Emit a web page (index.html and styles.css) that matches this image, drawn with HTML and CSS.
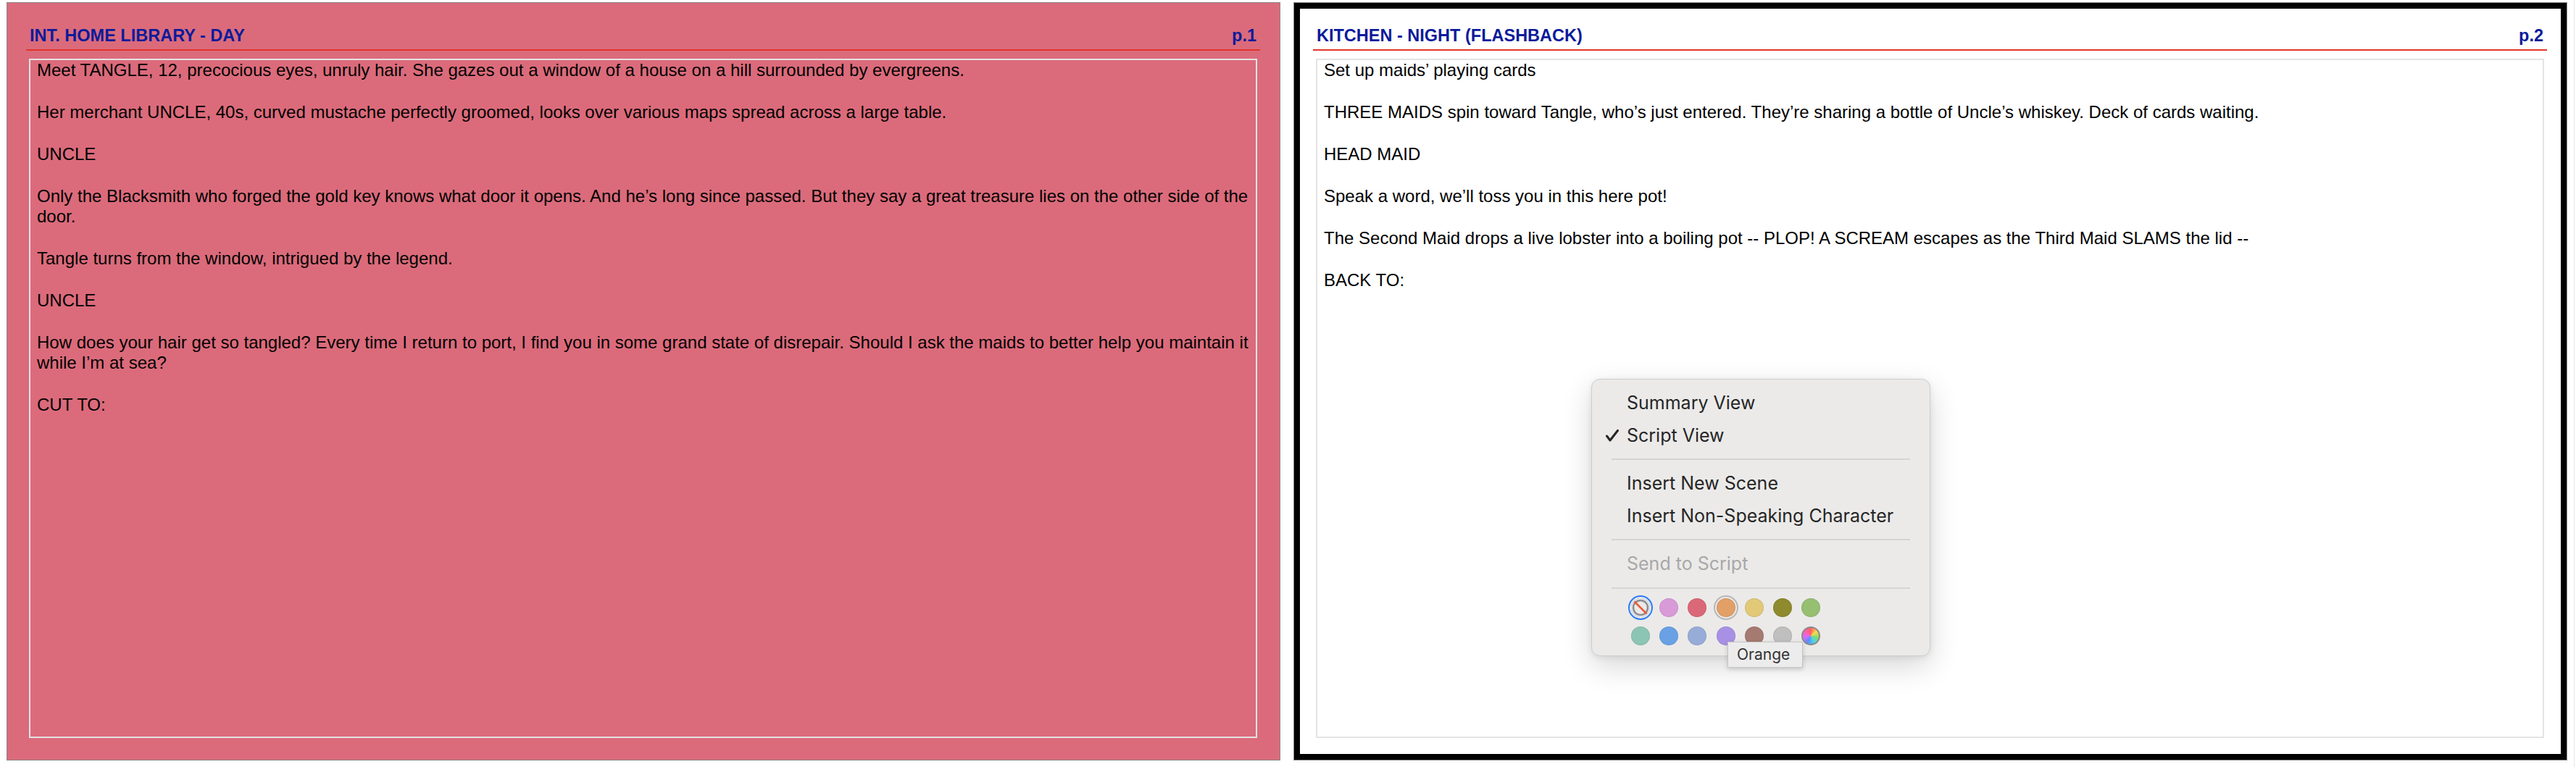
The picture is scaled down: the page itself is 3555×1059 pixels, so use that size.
FILE: index.html
```html
<!DOCTYPE html>
<html lang="en">
<head>
  <meta charset="UTF-8" />
  <title>Script View</title>
  <link rel="stylesheet" href="styles.css">
</head>
<body>
  <div class="page">

    <!-- Scene 1 -->
    <div class="scene scene-red">
      <div class="scene-head">
        <span>INT. HOME LIBRARY - DAY</span>
        <span>p.1</span>
      </div>
      <div class="scene-body">
        <p>Meet TANGLE, 12, precocious eyes, unruly hair. She gazes out a window of a house on a hill surrounded by evergreens.</p>
        <p>Her merchant UNCLE, 40s, curved mustache perfectly groomed, looks over various maps spread across a large table.</p>
        <p>UNCLE</p>
        <p>Only the Blacksmith who forged the gold key knows what door it opens. And he’s long since passed. But they say a great treasure lies on the other side of the<br>door.</p>
        <p>Tangle turns from the window, intrigued by the legend.</p>
        <p>UNCLE</p>
        <p>How does your hair get so tangled? Every time I return to port, I find you in some grand state of disrepair. Should I ask the maids to better help you maintain it<br>while I’m at sea?</p>
        <p>CUT TO:</p>
      </div>
    </div>

    <!-- Scene 2 (selected) -->
    <div class="scene selected">
      <div class="scene-head">
        <span>KITCHEN - NIGHT (FLASHBACK)</span>
        <span>p.2</span>
      </div>
      <div class="scene-body">
        <p>Set up maids’ playing cards</p>
        <p>THREE MAIDS spin toward Tangle, who’s just entered. They’re sharing a bottle of Uncle’s whiskey. Deck of cards waiting.</p>
        <p>HEAD MAID</p>
        <p>Speak a word, we’ll toss you in this here pot!</p>
        <p>The Second Maid drops a live lobster into a boiling pot -- PLOP! A SCREAM escapes as the Third Maid SLAMS the lid --</p>
        <p>BACK TO:</p>
      </div>
    </div>
  </div>

  <!-- Context menu -->
  <div class="menu">
    <div class="menu-item">Summary View</div>
    <div class="menu-item">
      <svg class="check" width="18" height="17" viewBox="0 0 18 17">
        <path d="M1.5 9 L6 15 L16.5 1.5" fill="none" stroke="#262626" stroke-width="3" stroke-linecap="round" stroke-linejoin="round"/>
      </svg>
      Script View
    </div>
    <div class="menu-sep"></div>
    <div class="menu-item">Insert New Scene</div>
    <div class="menu-item">Insert Non-Speaking Character</div>
    <div class="menu-sep"></div>
    <div class="menu-item disabled">Send to Script</div>
    <div class="menu-sep"></div>
    <div class="swatches">
      <span class="swatch none">
        <svg width="26" height="26" viewBox="0 0 26 26">
          <circle cx="13" cy="13" r="10" fill="none" stroke="#8e8e8e" stroke-width="2.5"/>
          <line x1="4.5" y1="4.5" x2="21.5" y2="21.5" stroke="#ee5a3b" stroke-width="2.5"/>
        </svg>
      </span>
      <span class="swatch lilac"></span>
      <span class="swatch red"></span>
      <span class="swatch orange hover"></span>
      <span class="swatch yellow"></span>
      <span class="swatch olive"></span>
      <span class="swatch green"></span>
      <span class="swatch teal"></span>
      <span class="swatch blue"></span>
      <span class="swatch periwinkle"></span>
      <span class="swatch purple"></span>
      <span class="swatch brown"></span>
      <span class="swatch grey"></span>
      <span class="swatch rainbow"></span>
    </div>
  </div>

  <div class="tooltip">Orange</div>
</body>
</html>
```

FILE: styles.css
```css
/* Page */
body {
  margin: 0;
  background-color: #ffffff;
  font-family: "Liberation Sans", Arial, sans-serif;
}

.page {
  display: flex;
  gap: 18px;
  height: 1059px;
  box-sizing: border-box;
  margin-right: 2px;
  padding: 3px 9px 9px 9px;
  border-right: 1px solid #e6e6e6;
}

/* Scene cards */
.scene {
  flex: 1;
  display: flex;
  flex-direction: column;
  box-sizing: border-box;
  padding: 31px 27px 30px 26px;
  border: 1px solid #8a8a8a;
  background-color: #ffffff;
}

.scene-red {
  background-color: #db6b7b;
}

.scene.selected {
  box-shadow: inset 0 0 0 8px #000000;
}

.scene-head {
  display: flex;
  justify-content: space-between;
  padding: 0 5px 5px 5px;
  border-bottom: 2px solid #e3352b;
  color: #0b1b9b;
  font-size: 23.5px;
  font-weight: bold;
  line-height: 28px;
}

.scene-body {
  flex: 1;
  margin: 11px 4px 0 4px;
  padding: 0 9px;
  border: 2px solid #e4e4e4;
  color: #000000;
  font-size: 24px;
  line-height: 28px;
}

.scene-body p {
  margin: 0 0 30px 0;
  white-space: nowrap;
}

/* Context menu */
.menu {
  position: absolute;
  left: 2196px;
  top: 523px;
  width: 468px;
  box-sizing: border-box;
  padding: 10px 0 14px 0;
  background-color: #ebeae9;
  border: 1px solid #cdcdcd;
  border-radius: 12px;
  box-shadow: 0 14px 40px rgba(0, 0, 0, 0.16), 0 2px 8px rgba(0, 0, 0, 0.08);
  font-family: Inter, "Liberation Sans", sans-serif;
  font-size: 25px;
  color: #262626;
}

.menu-item {
  position: relative;
  height: 44.5px;
  line-height: 44.5px;
  padding-left: 48px;
}

.menu-item.disabled {
  color: #a8a8a8;
}

.check {
  position: absolute;
  left: 19px;
  top: 14px;
}

.menu-sep {
  height: 2px;
  margin: 10px 27px;
  background-color: #d6d5d4;
}

.swatches {
  display: grid;
  grid-template-columns: repeat(7, 26px);
  column-gap: 13.2px;
  row-gap: 13.4px;
  padding: 3px 0 0 54px;
}

.swatch {
  display: block;
  width: 26px;
  height: 26px;
  box-sizing: border-box;
  border-radius: 50%;
  border: 1px solid rgba(0, 0, 0, 0.08);
}

.swatch.none {
  border: none;
  box-shadow: 0 0 0 2px #ebeae9, 0 0 0 4px #2a7bf5;
}

.swatch.none svg {
  display: block;
}

.swatch.hover {
  box-shadow: 0 0 0 2px #ebeae9, 0 0 0 4px #b7b7b7;
}

.lilac { background-color: #d99ad8; }
.red { background-color: #db6877; }
.orange { background-color: #e2a067; }
.yellow { background-color: #e2c978; }
.olive { background-color: #8e8a2d; }
.green { background-color: #96bf72; }
.teal { background-color: #8dc5b4; }
.blue { background-color: #6aa1e5; }
.periwinkle { background-color: #97acd7; }
.purple { background-color: #a891e4; }
.brown { background-color: #a57a71; }
.grey { background-color: #bfbfbf; }

.rainbow {
  border: 2px solid #8a8a8a;
  background: conic-gradient(#ff5f5f, #ffd84d, #7ee06a, #4fd1e6, #5b8cff, #d46bff, #ff5fb0, #ff5f5f);
}

/* Tooltip */
.tooltip {
  position: absolute;
  left: 2384px;
  top: 886px;
  width: 104px;
  height: 36px;
  box-sizing: border-box;
  padding-left: 12px;
  background-color: #ececec;
  border: 1px solid #c6c6c6;
  box-shadow: 0 2px 6px rgba(0, 0, 0, 0.18);
  font-family: Inter, "Liberation Sans", sans-serif;
  font-size: 21px;
  line-height: 34px;
  color: #333333;
}
```
